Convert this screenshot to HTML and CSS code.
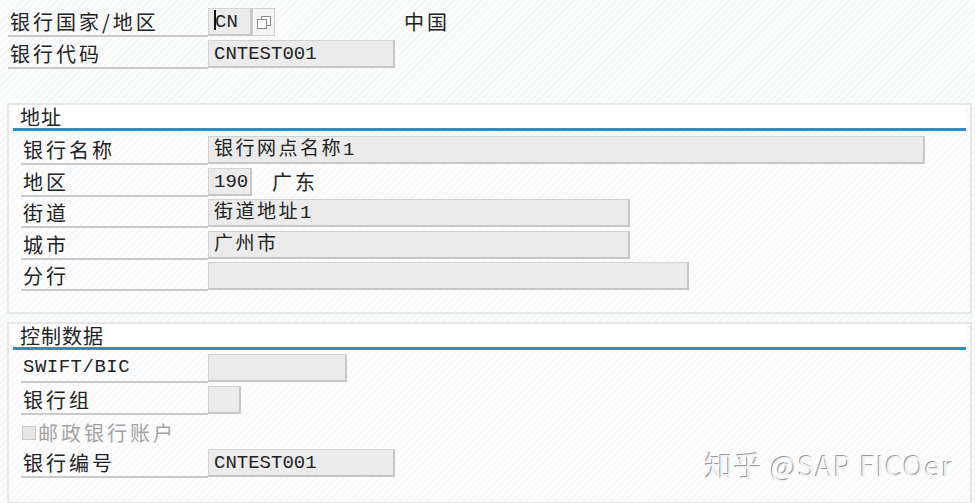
FILE: index.html
```html
<!DOCTYPE html>
<html lang="zh-CN">
<head>
  <meta charset="UTF-8" />
  <title>银行主数据</title>
  <link rel="stylesheet" href="styles.css">
</head>
<body>

  <!-- 抬头 -->
  <div class="top">
    <div class="row">
      <label class="lbl">银行国家/地区</label>
      <div class="fld w-cn"><span class="caret"></span>CN</div>
      <div class="f4">
        <svg width="16" height="16" viewBox="0 0 16 16">
          <rect x="5.5" y="2.5" width="9" height="9" fill="#fff" stroke="#8a8a8a"/>
          <rect x="1.5" y="5.5" width="9" height="9" fill="#fff" stroke="#8a8a8a"/>
        </svg>
      </div>
      <span class="txt country">中国</span>
    </div>
    <div class="row">
      <label class="lbl">银行代码</label>
      <div class="fld w-code">CNTEST001</div>
    </div>
  </div>

  <!-- 地址 -->
  <div class="box box-addr">
    <div class="box-head">地址</div>
    <div class="row">
      <label class="lbl">银行名称</label>
      <div class="fld cjk w-name">银行网点名称1</div>
    </div>
    <div class="row">
      <label class="lbl">地区</label>
      <div class="fld w-region">190</div>
      <span class="txt region">广东</span>
    </div>
    <div class="row">
      <label class="lbl">街道</label>
      <div class="fld cjk w-street">街道地址1</div>
    </div>
    <div class="row">
      <label class="lbl">城市</label>
      <div class="fld cjk w-street">广州市</div>
    </div>
    <div class="row">
      <label class="lbl">分行</label>
      <div class="fld w-branch"></div>
    </div>
  </div>

  <!-- 控制数据 -->
  <div class="box box-ctrl">
    <div class="box-head">控制数据</div>
    <div class="row">
      <label class="lbl latin">SWIFT/BIC</label>
      <div class="fld w-swift"></div>
    </div>
    <div class="row">
      <label class="lbl">银行组</label>
      <div class="fld w-group"></div>
    </div>
    <div class="row chk-row">
      <span class="chk"></span>
      <span class="chk-text">邮政银行账户</span>
    </div>
    <div class="row">
      <label class="lbl">银行编号</label>
      <div class="fld w-code">CNTEST001</div>
    </div>
  </div>

  <div class="watermark">知乎 @SAP FICOer</div>

</body>
</html>
```

FILE: styles.css
```css
* { box-sizing: border-box; }
body {
  margin: 0;
  padding: 8px 3px 0 7px;
  width: 975px;
  height: 503px;
  overflow: hidden;
  position: relative;
  font-family: "Noto Sans CJK SC", "Liberation Mono", sans-serif;
  font-size: 20px;
  color: #222;
  background: repeating-linear-gradient(135deg, #f4f6f7 0 2px, #fbfcfc 2px 5px);
}
.top { padding-left: 1px; }
.row {
  display: flex;
  align-items: flex-start;
  height: 32px;
}
.lbl {
  width: 200px;
  height: 29px;
  line-height: 27px;
  padding-left: 2px;
  letter-spacing: 3px;
  border-bottom: 2px solid #c9c9c9;
  white-space: nowrap;
}
.box .lbl { width: 187px; }
.box .row { height: 31.5px; }
.lbl.latin {
  font-family: "Liberation Mono", monospace;
  font-size: 19px;
  letter-spacing: 0.5px;
}
.fld {
  height: 28px;
  line-height: 26px;
  padding-left: 5px;
  background: #ebebeb;
  border: 1px solid #d2d2d2;
  border-right: 2px solid #c6c6c6;
  border-bottom: 2px solid #c6c6c6;
  font-family: "Liberation Mono", "Noto Sans CJK SC", monospace;
  font-size: 19px;
  letter-spacing: 0;
  white-space: nowrap;
  overflow: hidden;
}
.fld.cjk { letter-spacing: 2.5px; }
.caret {
  display: inline-block;
  width: 2px;
  height: 20px;
  margin-right: -1px;
  vertical-align: -3px;
  background: #111;
}
.f4 {
  width: 23px;
  height: 28px;
  display: flex;
  align-items: center;
  justify-content: center;
  background: #f4f4f4;
  border: 1px solid #cfcfcf;
}
.txt {
  line-height: 27px;
  letter-spacing: 3px;
}
.country { margin-left: 129px; }
.region { margin-left: 20px; }

.w-cn { width: 44px; }
.w-code { width: 187px; }
.w-name { width: 717px; }
.w-region { width: 44px; }
.w-street { width: 422px; }
.w-branch { width: 481px; }
.w-swift { width: 139px; }
.w-group { width: 33px; }

/* 分组框 */
.box {
  border: 2px solid #e4e6e8;
  background: repeating-linear-gradient(135deg, #f7f8f9 0 2px, #fdfdfd 2px 5px);
  padding: 0 4px 0 12px;
}
.box-addr {
  margin-top: 31px;
  height: 211px;
}
.box-ctrl {
  margin-top: 8px;
  height: 182px;
}
.box-head {
  height: 26px;
  margin: 0 0 5px -8px;
  padding-left: 7px;
  line-height: 24px;
  letter-spacing: 1px;
  background: #fff;
  border-bottom: 3px solid #2b8fc5;
}
.box-ctrl .box-head { margin-bottom: 4px; }
.chk-row {
  align-items: center;
  color: #a3a3a3;
  letter-spacing: 3px;
}
.chk {
  width: 14px;
  height: 14px;
  margin: 0 2px 0 1px;
  background: #e6e6e6;
  border: 1px solid #c8c8c8;
}
.watermark {
  position: absolute;
  left: 705px;
  top: 445px;
  font-family: "Noto Sans CJK SC", sans-serif;
  font-size: 28px;
  color: #f3f3f3;
  text-shadow: -1px -1px 0 #9a9a9a, 1px 1px 0 #ffffff;
  letter-spacing: 1px;
}
```
